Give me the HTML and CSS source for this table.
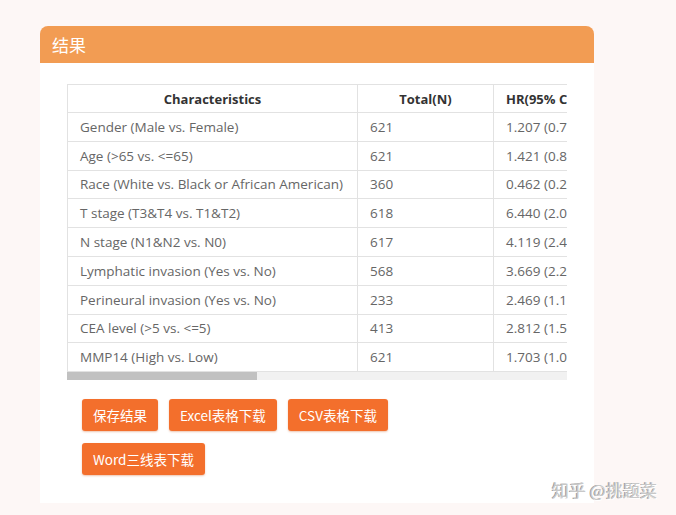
FILE: index.html
```html
<!DOCTYPE html>
<html lang="zh">
<head>
<meta charset="utf-8">
<title>结果</title>
<link rel="stylesheet" href="styles.css">
</head>
<body>
<div class="panel">
  <div class="panel-head">结果</div>
  <div class="panel-body">
    <div class="table-wrap">
      <div class="table-scroll">
        <table class="result-table">
          <colgroup>
            <col class="c1"><col class="c2"><col class="c3">
          </colgroup>
          <thead>
            <tr><th>Characteristics</th><th>Total(N)</th><th class="left">HR(95% CI)</th></tr>
          </thead>
          <tbody>
            <tr><td>Gender (Male vs. Female)</td><td>621</td><td>1.207 (0.760-1.916)</td></tr>
            <tr><td>Age (&gt;65 vs. &lt;=65)</td><td>621</td><td>1.421 (0.891-2.266)</td></tr>
            <tr><td>Race (White vs. Black or African American)</td><td>360</td><td>0.462 (0.227-0.942)</td></tr>
            <tr><td>T stage (T3&amp;T4 vs. T1&amp;T2)</td><td>618</td><td>6.440 (2.028-20.450)</td></tr>
            <tr><td>N stage (N1&amp;N2 vs. N0)</td><td>617</td><td>4.119 (2.493-6.804)</td></tr>
            <tr><td>Lymphatic invasion (Yes vs. No)</td><td>568</td><td>3.669 (2.245-5.996)</td></tr>
            <tr><td>Perineural invasion (Yes vs. No)</td><td>233</td><td>2.469 (1.163-5.241)</td></tr>
            <tr><td>CEA level (&gt;5 vs. &lt;=5)</td><td>413</td><td>2.812 (1.569-5.039)</td></tr>
            <tr><td>MMP14 (High vs. Low)</td><td>621</td><td>1.703 (1.071-2.708)</td></tr>
          </tbody>
        </table>
      </div>
      <div class="scrollbar"><div class="scroll-thumb"></div></div>
    </div>
    <div class="actions">
      <button class="btn">保存结果</button>
      <button class="btn">Excel表格下载</button>
      <button class="btn">CSV表格下载</button>
      <button class="btn">Word三线表下载</button>
    </div>
  </div>
</div>
<div class="watermark">知乎 @挑题菜</div>
</body>
</html>
```
FILE: styles.css
```css
html, body {
  margin: 0;
  padding: 0;
}
body {
  background: #fdf7f6;
  font-family: "Open Sans", "Noto Sans CJK SC", sans-serif;
  width: 676px;
  height: 515px;
  overflow: hidden;
  position: relative;
}
.panel {
  margin: 26px 0 0 40px;
  width: 554px;
}
.panel-head {
  height: 37px;
  background: #f29c53;
  border-radius: 8px 8px 0 0;
  color: #fff;
  font-family: "Noto Sans CJK SC", sans-serif;
  font-size: 17px;
  line-height: 37px;
  padding-left: 12px;
  box-sizing: border-box;
}
.panel-body {
  background: #fff;
  padding: 21px 27px 28px 27px;
  height: 440px;
  box-sizing: border-box;
}
.table-wrap {
  width: 500px;
}
.table-scroll {
  width: 500px;
  overflow: hidden;
}
.scrollbar {
  height: 8px;
  background: #f1f1f1;
}
.scroll-thumb {
  width: 190px;
  height: 8px;
  background: #c1c1c1;
}
.result-table {
  border-collapse: collapse;
  width: 800px;
  table-layout: fixed;
  font-size: 13.5px;
  color: #666;
}
.c1 { width: 290px; }
.c2 { width: 136px; }
.c3 { width: 374px; }
.result-table th,
.result-table td {
  border: 1px solid #e2e2e2;
  padding: 0 12px;
  white-space: nowrap;
  text-align: left;
}
.result-table th {
  height: 27px;
  font-size: 13px;
  font-weight: 700;
  color: #333;
  text-align: center;
}
.result-table th.left {
  text-align: left;
}
.result-table td {
  height: 27.8px;
}
.actions {
  display: flex;
  flex-wrap: wrap;
  gap: 12px 11px;
  padding: 19px 100px 0 15px;
}
.btn {
  height: 32px;
  padding: 0 11px;
  border: none;
  border-radius: 3px;
  background: #f36f2c;
  color: #fff;
  font-family: "Noto Sans CJK SC", sans-serif;
  font-size: 13.5px;
  line-height: 32px;
  box-shadow: 0 1px 2px rgba(200, 90, 30, 0.35);
}
.watermark {
  position: absolute;
  left: 552px;
  top: 477px;
  font-family: "Noto Sans CJK SC", sans-serif;
  font-size: 17px;
  color: #c8c8c8;
  text-shadow: 1px 1px 0 #fff, -1px 0 0 #999;
}
```
